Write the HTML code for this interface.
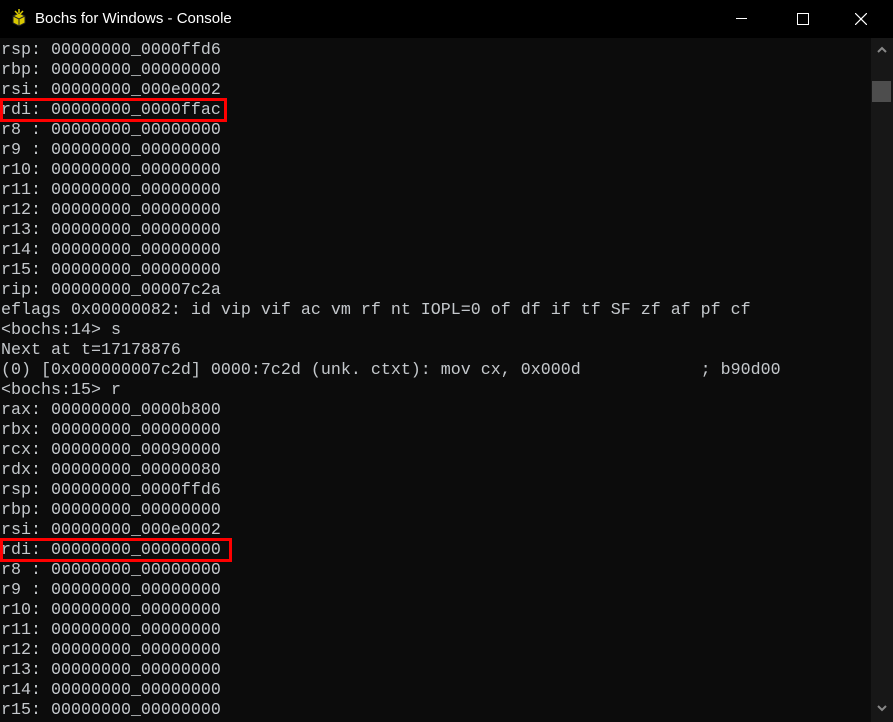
<!DOCTYPE html>
<html><head><meta charset="utf-8"><style>
html,body{margin:0;padding:0;width:893px;height:722px;overflow:hidden;background:#0c0c0c}
.title{position:absolute;left:0;top:0;width:893px;height:38px;background:#000;color:#fff;font:15px "Liberation Sans",sans-serif}
.title span{position:absolute;left:35px;top:10px}
.con{position:absolute;left:0;top:38px;width:870px;height:684px;background:#0c0c0c;overflow:hidden}
pre{margin:0;padding:3px 0 0 1px;font-family:"Liberation Mono",monospace;font-size:16.67px;line-height:20px;color:#c4c8cc;white-space:pre}
.sb{position:absolute;left:871px;top:38px;width:22px;height:684px;background:#171717}
.box{position:absolute;border:3px solid #f00;box-sizing:border-box}
</style></head><body>
<div class="title">
<svg style="position:absolute;left:10px;top:9px" width="18" height="18" viewBox="0 0 18 18"><path d="M3 7 L9 4 L15 7 L15 14 L9 17 L3 14Z" fill="#d8c800" stroke="#222" stroke-width="1"/><path d="M3 7 L9 10 L15 7 M9 10 V17" stroke="#222" fill="none"/><path d="M5 2 L8 5 M13 2 L10 5 M9 0 V4" stroke="#d8c800" stroke-width="1.5"/></svg>
<span>Bochs for Windows - Console</span>
<div style="position:absolute;left:736px;top:18px;width:11px;height:1px;background:#fff"></div>
<div style="position:absolute;left:797px;top:13px;width:10px;height:10px;border:1px solid #fff"></div>
<svg style="position:absolute;left:855px;top:13px" width="12" height="12"><path d="M0 0L12 12M12 0L0 12" stroke="#fff" stroke-width="1.2"/></svg>
</div>
<div class="con"><pre>rsp: 00000000_0000ffd6
rbp: 00000000_00000000
rsi: 00000000_000e0002
rdi: 00000000_0000ffac
r8 : 00000000_00000000
r9 : 00000000_00000000
r10: 00000000_00000000
r11: 00000000_00000000
r12: 00000000_00000000
r13: 00000000_00000000
r14: 00000000_00000000
r15: 00000000_00000000
rip: 00000000_00007c2a
eflags 0x00000082: id vip vif ac vm rf nt IOPL=0 of df if tf SF zf af pf cf
&lt;bochs:14&gt; s
Next at t=17178876
(0) [0x000000007c2d] 0000:7c2d (unk. ctxt): mov cx, 0x000d            ; b90d00
&lt;bochs:15&gt; r
rax: 00000000_0000b800
rbx: 00000000_00000000
rcx: 00000000_00090000
rdx: 00000000_00000080
rsp: 00000000_0000ffd6
rbp: 00000000_00000000
rsi: 00000000_000e0002
rdi: 00000000_00000000
r8 : 00000000_00000000
r9 : 00000000_00000000
r10: 00000000_00000000
r11: 00000000_00000000
r12: 00000000_00000000
r13: 00000000_00000000
r14: 00000000_00000000
r15: 00000000_00000000</pre></div>
<div class="sb">
<svg style="position:absolute;left:6px;top:8px" width="10" height="7"><path d="M1 6L5 2L9 6" stroke="#888" stroke-width="2" fill="none"/></svg>
<div style="position:absolute;left:1px;top:43px;width:19px;height:21px;background:#4d4d4d"></div>
<svg style="position:absolute;left:6px;top:667px" width="10" height="7"><path d="M1 1L5 5L9 1" stroke="#888" stroke-width="2" fill="none"/></svg>
</div>
<div class="box" style="left:0;top:98px;width:227px;height:24px"></div>
<div class="box" style="left:0;top:538px;width:232px;height:24px"></div>
</body></html>
